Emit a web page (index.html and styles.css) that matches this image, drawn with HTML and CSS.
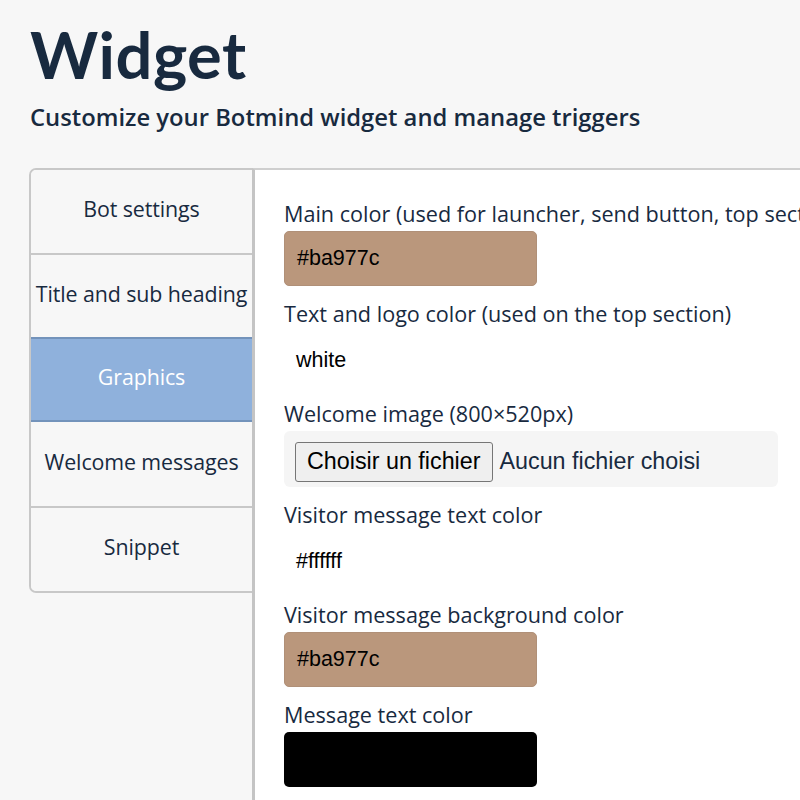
FILE: index.html
```html
<!DOCTYPE html>
<html>
<head>
<meta charset="utf-8">
<link rel="stylesheet" href="styles.css">
</head>
<body>
<header class="page-head">
  <h1 class="title">Widget</h1>
  <p class="subtitle">Customize your Botmind widget and manage triggers</p>
</header>
<div class="layout">
  <nav class="tabs">
    <div class="tab">Bot settings</div>
    <div class="tab">Title and sub heading</div>
    <div class="tab active">Graphics</div>
    <div class="tab">Welcome messages</div>
    <div class="tab">Snippet</div>
  </nav>
  <main class="panel">
    <div class="field">
      <label class="label">Main color (used for launcher, send button, top section)</label>
      <div class="input color-input brown">#ba977c</div>
    </div>
    <div class="field">
      <label class="label">Text and logo color (used on the top section)</label>
      <div class="input color-input plain">white</div>
    </div>
    <div class="field">
      <label class="label">Welcome image (800×520px)</label>
      <div class="file-box">
        <span class="file-btn">Choisir un fichier</span>
        <span class="file-name">Aucun fichier choisi</span>
      </div>
    </div>
    <div class="field">
      <label class="label">Visitor message text color</label>
      <div class="input color-input plain">#ffffff</div>
    </div>
    <div class="field">
      <label class="label">Visitor message background color</label>
      <div class="input color-input brown">#ba977c</div>
    </div>
    <div class="field">
      <label class="label">Message text color</label>
      <div class="input color-input black"></div>
    </div>
  </main>
</div>
</body>
</html>
```
FILE: styles.css
```css
html, body {
  margin: 0;
  padding: 0;
  height: 100%;
  overflow: hidden;
}
body {
  background: #f7f7f7;
  font-family: "Open Sans", "Noto Sans", sans-serif;
  color: #182a3f;
}
.page-head {
  padding: 18px 0 0 30px;
  height: 150px;
  box-sizing: border-box;
}
.title {
  margin: 0;
  font-family: "Lato", "Open Sans", sans-serif;
  font-size: 65px;
  font-weight: 700;
  line-height: 72px;
  letter-spacing: 0.5px;
}
.subtitle {
  margin: 13px 0 0 0;
  font-size: 23.8px;
  font-weight: 600;
  line-height: 28px;
  white-space: nowrap;
}
.layout {
  display: flex;
  margin-top: 18px;
  padding-left: 29px;
  height: 640px;
}
.tabs {
  width: 223px;
  flex: none;
  align-self: flex-start;
  display: flex;
  flex-direction: column;
  border: 2px solid #c8c8c8;
  border-right: none;
  border-radius: 7px 0 0 7px;
  overflow: hidden;
  box-sizing: border-box;
}
.tab {
  height: 84.5px;
  box-sizing: border-box;
  display: flex;
  align-items: center;
  justify-content: center;
  padding-bottom: 5px;
  font-size: 21.4px;
  letter-spacing: -0.1px;
  background: #f7f7f7;
  border-top: 2px solid #c8c8c8;
  white-space: nowrap;
}
.tab:first-child {
  border-top: none;
  height: 82.5px;
}
.tab.active {
  background: #8fb1dc;
  color: #ffffff;
  border-top-color: #7393bb;
  border-bottom: 2px solid #7393bb;
}
.tab.active + .tab {
  border-top: none;
}
.panel {
  flex: 1;
  background: #ffffff;
  border-top: 2px solid #cfcfcf;
  border-left: 3px solid #c4c4c4;
  padding: 30px 0 0 29px;
  min-width: 0;
  overflow: hidden;
}
.field {
  margin-bottom: 14px;
}
.label {
  display: block;
  font-size: 21.6px;
  line-height: 28px;
  margin-bottom: 3px;
  white-space: nowrap;
}
.input {
  width: 253px;
  height: 55px;
  box-sizing: border-box;
  border-radius: 5px;
  display: flex;
  align-items: center;
  padding-left: 12px;
  font-family: "Liberation Sans", Arial, sans-serif;
  font-size: 21.5px;
  color: #000000;
}
.plain {
  background: #ffffff;
  padding-top: 3px;
}
.brown {
  background: #ba977c;
  border: 1px solid #b09078;
}
.black {
  background: #000000;
}
.file-box {
  width: 494px;
  height: 56px;
  box-sizing: border-box;
  background: #f5f5f5;
  border-radius: 6px;
  display: flex;
  align-items: center;
  padding: 5px 0 0 11px;
  font-family: "Liberation Sans", Arial, sans-serif;
  font-size: 23.3px;
}
.file-btn {
  height: 40px;
  box-sizing: border-box;
  padding: 0 11px;
  display: flex;
  align-items: center;
  background: #efefef;
  border: 1px solid #767676;
  border-radius: 3px;
  color: #000000;
}
.file-name {
  margin-left: 7px;
  color: #182a3f;
}
```
